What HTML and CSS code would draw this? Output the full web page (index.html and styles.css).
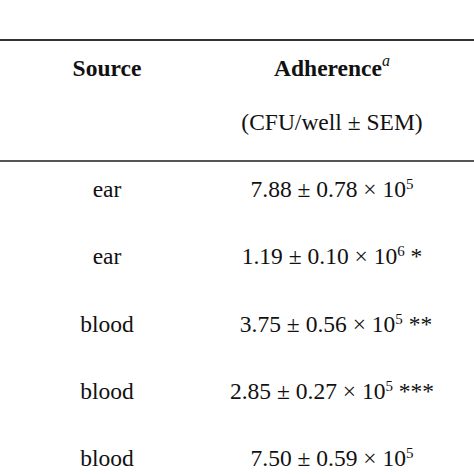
FILE: index.html
```html
<!DOCTYPE html>
<html>
<head>
<meta charset="utf-8">
<link rel="stylesheet" href="styles.css">
</head>
<body>
<div class="table">
  <div class="head">
    <div class="col src"><b>Source</b></div>
    <div class="col adh"><b>Adherence</b><sup class="fn">a</sup><br>(CFU/well ± SEM)</div>
  </div>
  <div class="rows">
    <div class="row"><div class="col">ear</div><div class="col">7.88 ± 0.78 × 10<sup>5</sup></div></div>
    <div class="row"><div class="col">ear</div><div class="col">1.19 ± 0.10 × 10<sup>6</sup> *</div></div>
    <div class="row"><div class="col">blood</div><div class="col shift">3.75 ± 0.56 × 10<sup>5</sup> **</div></div>
    <div class="row"><div class="col">blood</div><div class="col">2.85 ± 0.27 × 10<sup>5</sup> ***</div></div>
    <div class="row"><div class="col">blood</div><div class="col">7.50 ± 0.59 × 10<sup>5</sup></div></div>
  </div>
</div>
</body>
</html>
```

FILE: styles.css
```css
html, body {
  margin: 0;
  padding: 0;
  background: #fff;
}
body {
  width: 474px;
  height: 474px;
  overflow: hidden;
  font-family: "Liberation Serif", "Times New Roman", serif;
  font-size: 23.5px;
  color: #111;
}
.table {
  padding-top: 39px;
}
.head {
  display: grid;
  grid-template-columns: 214px 236px;
  border-top: 2px solid #333;
  border-bottom: 2px solid #555;
  line-height: 54px;
  padding-bottom: 11px;
}
.col {
  text-align: center;
  white-space: nowrap;
}
.head b {
  font-weight: bold;
}
sup {
  font-size: 15px;
  line-height: 0;
  vertical-align: 8px;
}
sup.fn {
  font-style: italic;
  font-size: 16px;
  vertical-align: 10px;
}
.rows {
  padding-top: 12px;
}
.row {
  display: grid;
  grid-template-columns: 214px 236px;
  height: 67.25px;
  line-height: 30px;
}
.row:last-child {
  height: 30px;
}
.shift {
  padding-left: 8px;
}
```
